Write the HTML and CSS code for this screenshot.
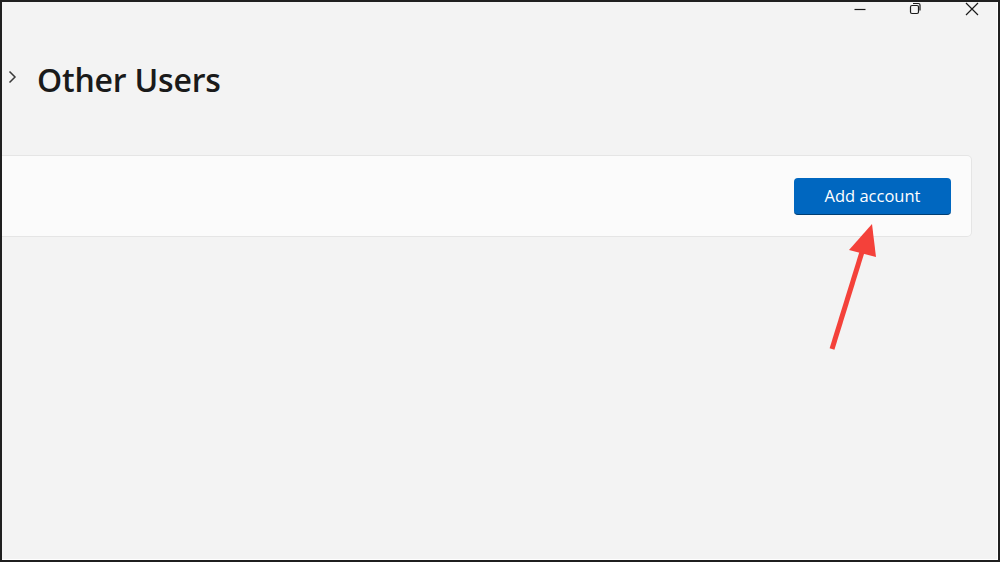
FILE: index.html
```html
<!DOCTYPE html>
<html>
<head>
<meta charset="utf-8">
<link rel="stylesheet" href="styles.css">
</head>
<body>
<div class="window">
  <div class="titlebar">
    <div class="ctl">
      <svg width="14" height="14" viewBox="0 0 14 14"><path d="M1.5 7.5h11" stroke="#1a1a1a" stroke-width="1.2" fill="none"/></svg>
    </div>
    <div class="ctl">
      <svg width="14" height="14" viewBox="0 0 14 14"><rect x="1.5" y="3.5" width="8" height="8" rx="1.5" stroke="#1a1a1a" stroke-width="1.2" fill="none"/><path d="M4 1.5h5.5a1.5 1.5 0 0 1 1.5 1.5v5.5" stroke="#1a1a1a" stroke-width="1.2" fill="none"/></svg>
    </div>
    <div class="ctl">
      <svg width="14" height="14" viewBox="0 0 14 14"><path d="M1 1l12 12M13 1L1 13" stroke="#1a1a1a" stroke-width="1.2" fill="none"/></svg>
    </div>
  </div>
  <div class="header">
    <svg class="chev" width="9" height="14" viewBox="0 0 9 14"><path d="M1.5 1.5l5.5 5.5-5.5 5.5" stroke="#3a3a3a" stroke-width="1.5" fill="none"/></svg>
    <h1 class="title">Other Users</h1>
  </div>
  <div class="card">
    <button class="btn">Add account</button>
  </div>
  <svg class="arrow" width="1000" height="562" viewBox="0 0 1000 562">
    <line x1="832" y1="349" x2="862" y2="252" stroke="#f4413a" stroke-width="5" stroke-linecap="butt"/>
    <polygon points="872,224 849,250 876,257" fill="#f4413a"/>
  </svg>
</div>
</body>
</html>
```
FILE: styles.css
```css
html, body {
  margin: 0;
  padding: 0;
  background: #f3f3f3;
}
.window {
  position: relative;
  width: 1000px;
  height: 562px;
  box-sizing: border-box;
  border: 2px solid #1f1f1f;
  background: #f3f3f3;
  box-shadow: inset -1px -1px 0 #ffffff;
  font-family: "Open Sans", "Noto Sans", sans-serif;
  overflow: hidden;
}
.titlebar {
  display: flex;
  justify-content: flex-end;
  height: 20px;
  margin-right: -2px;
}
.ctl {
  width: 56px;
  height: 14px;
  display: flex;
  justify-content: center;
  align-items: flex-start;
}
.ctl svg { display: block; }
.header {
  display: flex;
  align-items: center;
  height: 72px;
  margin-top: 21px;
}
.chev {
  margin-left: 6px;
  margin-right: 20px;
  margin-top: -4px;
}
.title {
  margin: 0;
  font-size: 32px;
  font-weight: 600;
  color: #1a1a1a;
  letter-spacing: -0.2px;
}
.card {
  margin-top: 40px;
  margin-right: 26px;
  height: 80px;
  background: #fbfbfb;
  border: 1px solid #e5e5e5;
  border-left: none;
  border-radius: 0 5px 5px 0;
  display: flex;
  justify-content: flex-end;
  align-items: center;
  padding-right: 20px;
}
.btn {
  width: 157px;
  height: 37px;
  background: #0067c0;
  color: #ffffff;
  border: none;
  border-bottom: 1px solid #003e73;
  border-radius: 4px;
  font-family: "Open Sans", "Noto Sans", sans-serif;
  font-size: 16.5px;
  padding: 0;
}
.arrow {
  position: absolute;
  left: -2px;
  top: -2px;
}
```
